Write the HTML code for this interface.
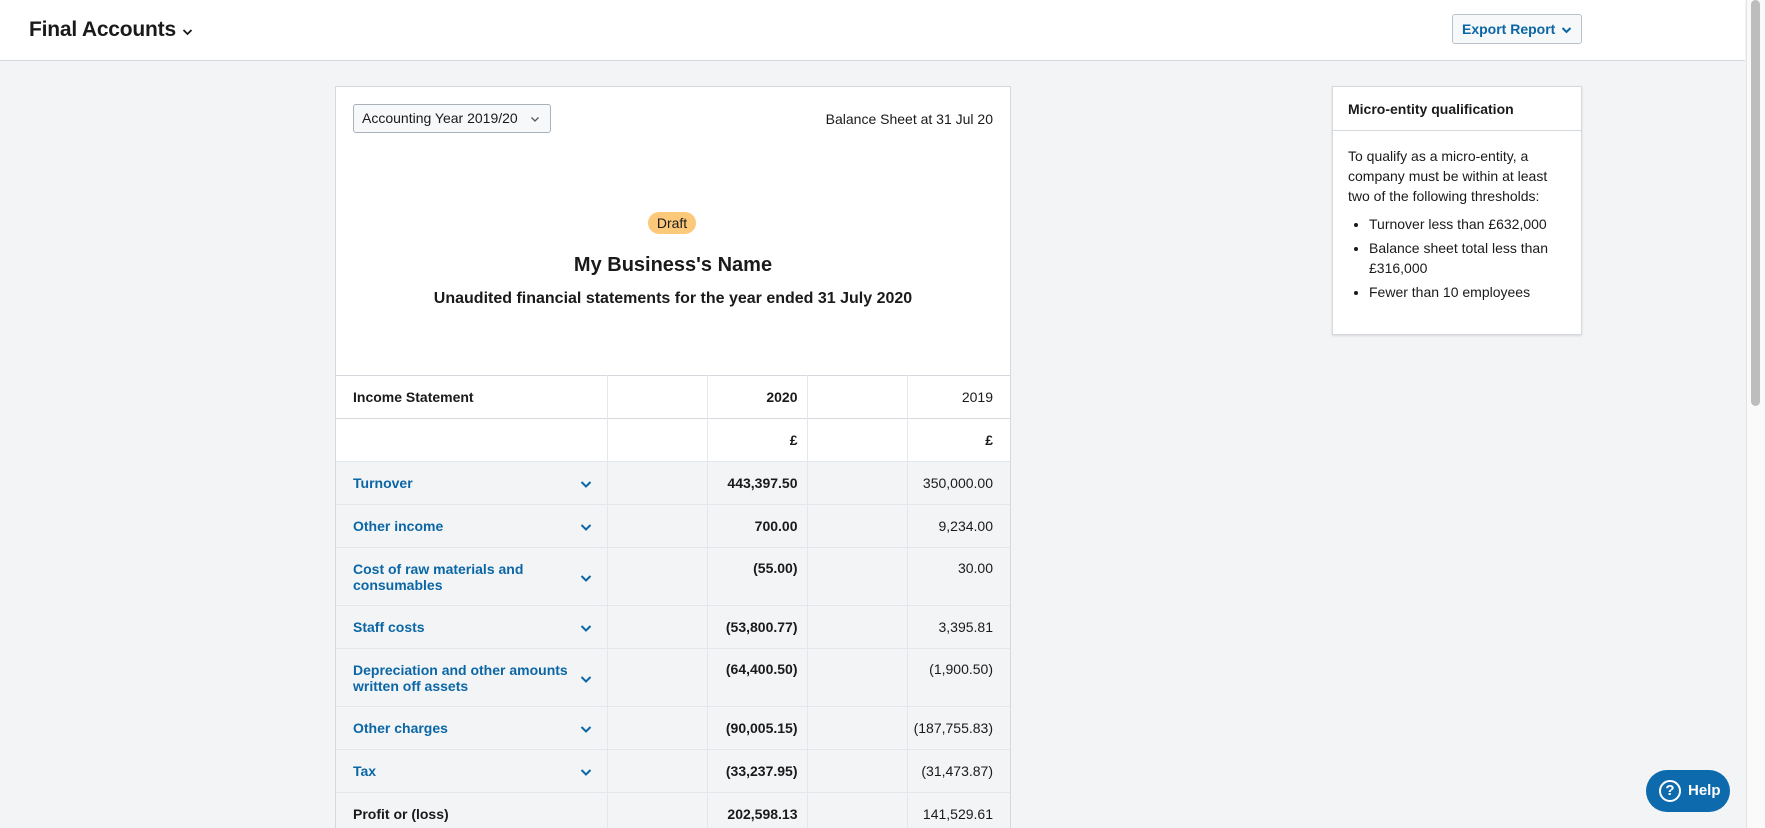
<!DOCTYPE html>
<html style="height:828px;overflow:hidden"><head><meta charset="utf-8"><style>
*{box-sizing:border-box;margin:0;padding:0}
html,body{overflow:hidden}
body{width:1765px;height:828px;overflow:hidden;background:#f2f4f6;font-family:"Liberation Sans",Arial,sans-serif;color:#1a1a1a;position:relative}
.hdr{position:absolute;left:0;top:0;width:1745px;height:61px;background:#fff;border-bottom:1px solid #d5d9dd}
.title{position:absolute;left:29px;top:18px;font-size:21px;font-weight:bold;letter-spacing:-0.2px}
.export{position:absolute;left:1452px;top:14px;width:130px;height:30px;border:1px solid #b9c2ca;border-radius:3px;background:#f6f8fa;color:#0b66a6;font-weight:bold;font-size:14px;line-height:28px;padding-left:9px;white-space:nowrap}
.sb{position:absolute;left:1746px;top:0;width:19px;height:828px;background:#fafafa;border-left:1px solid #e3e3e3}
.sb div{position:absolute;left:4px;top:0;width:9px;height:406px;background:#bdbdbd;border-radius:5px}
.card{position:absolute;left:335px;top:86px;width:676px;height:742px;background:#fff;border:1px solid #d5d9dd;border-bottom:none;overflow:hidden}
.sel{position:absolute;left:17px;top:17px;width:198px;height:29px;border:1px solid #a9b1b9;border-radius:3px;background:#f7f8f9;font-size:14px;line-height:27px;padding-left:8px}
.bs{position:absolute;right:17px;top:24px;font-size:14px}
.draft{position:absolute;left:312px;top:125px;width:48px;height:22px;border-radius:11px;background:#fcc97a;font-size:14px;text-align:center;line-height:22px}
.bn{position:absolute;left:0;width:100%;top:167px;text-align:center;font-size:20px;font-weight:bold}
.sub{position:absolute;left:0;width:100%;top:203px;text-align:center;font-size:16px;font-weight:bold}
table{position:absolute;left:0;top:288px;width:674px;border-collapse:collapse;font-size:14px}
td{border-top:1px solid #d5d9dd;border-right:1px solid #e3e6ea;height:43px;vertical-align:middle;padding:0}
td:last-child{border-right:none}
tr.g td{background:#f2f4f6;border-top:1px solid #e3e6ea}
tr.h td{border-top:1px solid #d5d9dd}
.c1{width:271px;padding-left:17px;position:relative}
.c2{width:100px}.c3{width:100px;text-align:right;padding-right:9px;font-weight:bold}
.c4{width:100px}.c5{text-align:right;padding-right:17px}
.lk{color:#0b66a6;font-weight:bold;line-height:16px;display:block;width:225px}
.ch{position:absolute;left:244px;top:50%;margin-top:-3px}
tr.d td{height:58px}
tr.d .c3,tr.d .c5{vertical-align:top;padding-top:12px}
.side{position:absolute;left:1332px;top:86px;width:250px;height:249px;background:#fff;border:1px solid #d5d9dd;box-shadow:0 1px 2px rgba(0,0,0,.12)}
.sh{height:44px;border-bottom:1px solid #d5d9dd;font-weight:bold;font-size:14px;padding:14px 0 0 15px}
.sbody{padding:15px 15px;font-size:14px;line-height:20px}
.sbody ul{margin-top:8px;padding-left:21px}
.sbody li{margin-bottom:4px}
.help{position:absolute;left:1646px;top:770px;width:84px;height:42px;border-radius:21px;background:#0d6aad;color:#fff;font-weight:bold;font-size:15px;line-height:42px;padding-left:42px}
.help span{position:absolute;left:13px;top:10px;width:22px;height:22px;border:2px solid #fff;border-radius:50%;line-height:18px;text-align:center;font-size:15px;padding:0}
</style></head><body>
<div class="hdr"><div class="title">Final Accounts <svg width="11" height="8" viewBox="0 0 11 8"><path d="M1.5 2l4 4 4-4" stroke="#1a1a1a" stroke-width="1.8" fill="none"/></svg></div>
<div class="export">Export Report <svg width="11" height="8" viewBox="0 0 11 8" style="margin-left:2px"><path d="M1.5 2l4 4 4-4" stroke="#0b66a6" stroke-width="2" fill="none"/></svg></div></div>
<div class="sb"><div></div></div>
<div class="card">
<div class="sel">Accounting Year 2019/20 <svg width="10" height="7" viewBox="0 0 10 7" style="position:absolute;right:10px;top:11px"><path d="M1.5 1.5l3.5 3.5 3.5-3.5" stroke="#555" stroke-width="1.3" fill="none"/></svg></div>
<div class="bs">Balance Sheet at 31 Jul 20</div>
<div class="draft">Draft</div>
<div class="bn">My Business's Name</div>
<div class="sub">Unaudited financial statements for the year ended 31 July 2020</div>
<table>
<tr class="h"><td class="c1"><b>Income Statement</b></td><td class="c2"></td><td class="c3">2020</td><td class="c4"></td><td class="c5">2019</td></tr>
<tr class="h"><td class="c1"></td><td class="c2"></td><td class="c3">£</td><td class="c4"></td><td class="c5"><b>£</b></td></tr>
<tr class="g"><td class="c1"><span class="lk">Turnover</span><svg class="ch" width="12" height="9" viewBox="0 0 12 9"><path d="M1.5 2l4.5 4.5 4.5-4.5" stroke="#0b66a6" stroke-width="2" fill="none"/></svg></td><td class="c2"></td><td class="c3">443,397.50</td><td class="c4"></td><td class="c5">350,000.00</td></tr>
<tr class="g"><td class="c1"><span class="lk">Other income</span><svg class="ch" width="12" height="9" viewBox="0 0 12 9"><path d="M1.5 2l4.5 4.5 4.5-4.5" stroke="#0b66a6" stroke-width="2" fill="none"/></svg></td><td class="c2"></td><td class="c3">700.00</td><td class="c4"></td><td class="c5">9,234.00</td></tr>
<tr class="g d"><td class="c1"><span class="lk">Cost of raw materials and consumables</span><svg class="ch" width="12" height="9" viewBox="0 0 12 9"><path d="M1.5 2l4.5 4.5 4.5-4.5" stroke="#0b66a6" stroke-width="2" fill="none"/></svg></td><td class="c2"></td><td class="c3">(55.00)</td><td class="c4"></td><td class="c5">30.00</td></tr>
<tr class="g"><td class="c1"><span class="lk">Staff costs</span><svg class="ch" width="12" height="9" viewBox="0 0 12 9"><path d="M1.5 2l4.5 4.5 4.5-4.5" stroke="#0b66a6" stroke-width="2" fill="none"/></svg></td><td class="c2"></td><td class="c3">(53,800.77)</td><td class="c4"></td><td class="c5">3,395.81</td></tr>
<tr class="g d"><td class="c1"><span class="lk">Depreciation and other amounts written off assets</span><svg class="ch" width="12" height="9" viewBox="0 0 12 9"><path d="M1.5 2l4.5 4.5 4.5-4.5" stroke="#0b66a6" stroke-width="2" fill="none"/></svg></td><td class="c2"></td><td class="c3">(64,400.50)</td><td class="c4"></td><td class="c5">(1,900.50)</td></tr>
<tr class="g"><td class="c1"><span class="lk">Other charges</span><svg class="ch" width="12" height="9" viewBox="0 0 12 9"><path d="M1.5 2l4.5 4.5 4.5-4.5" stroke="#0b66a6" stroke-width="2" fill="none"/></svg></td><td class="c2"></td><td class="c3">(90,005.15)</td><td class="c4"></td><td class="c5">(187,755.83)</td></tr>
<tr class="g"><td class="c1"><span class="lk">Tax</span><svg class="ch" width="12" height="9" viewBox="0 0 12 9"><path d="M1.5 2l4.5 4.5 4.5-4.5" stroke="#0b66a6" stroke-width="2" fill="none"/></svg></td><td class="c2"></td><td class="c3">(33,237.95)</td><td class="c4"></td><td class="c5">(31,473.87)</td></tr>
<tr class="g"><td class="c1"><b>Profit or (loss)</b></td><td class="c2"></td><td class="c3">202,598.13</td><td class="c4"></td><td class="c5">141,529.61</td></tr>
</table>
</div>
<div class="side"><div class="sh">Micro-entity qualification</div>
<div class="sbody">To qualify as a micro-entity, a company must be within at least two of the following thresholds:
<ul><li>Turnover less than £632,000</li><li>Balance sheet total less than £316,000</li><li>Fewer than 10 employees</li></ul></div></div>
<div class="help"><span>?</span>Help</div>
</body></html>
